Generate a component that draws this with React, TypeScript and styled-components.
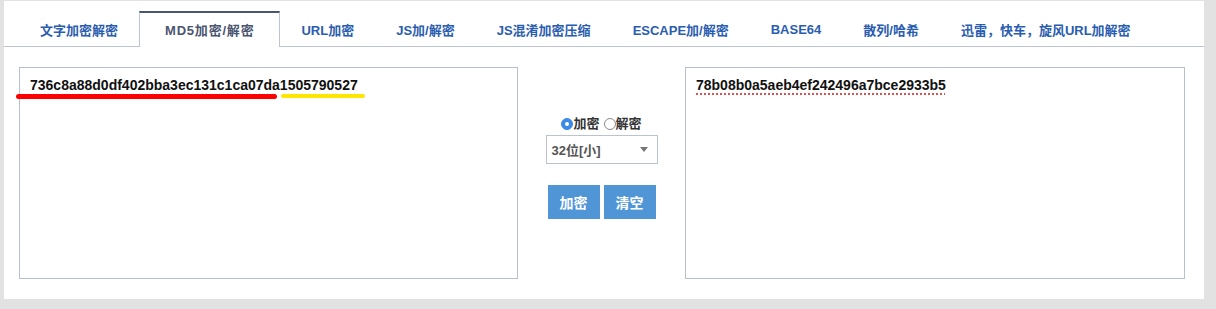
import styled, { createGlobalStyle } from 'styled-components';

const GlobalStyle = createGlobalStyle`
  html, body {
    margin: 0;
    padding: 0;
    background: #e2e2e2;
    font-family: "Liberation Sans", "Noto Sans CJK SC", sans-serif;
  }
`;

const Panel = styled.div`
  margin: 1px 0 0 4px;
  width: 1200px;
  height: 298px;
  background: #ffffff;
  box-sizing: border-box;
`;

const TabBar = styled.div`
  display: flex;
  align-items: flex-start;
  padding: 10px 0 0 15px;
  height: 46px;
  box-sizing: border-box;
  border-bottom: 1px solid #bcc3d3;
`;

const Tab = styled.div<{ $active?: boolean }>`
  height: ${({ $active }) => ($active ? '36px' : '35px')};
  margin-bottom: ${({ $active }) => ($active ? '-1px' : '0')};
  padding: ${({ $active }) => ($active ? '0 25px 1px' : '0 20px 1px')};
  letter-spacing: ${({ $active }) => ($active ? '0.8px' : '0')};
  box-sizing: border-box;
  display: flex;
  align-items: center;
  font-size: 13px;
  font-weight: 700;
  white-space: nowrap;
  color: ${({ $active }) => ($active ? '#4a5570' : '#2a5db0')};
  background: ${({ $active }) => ($active ? '#ffffff' : 'transparent')};
  border: 1px solid ${({ $active }) => ($active ? '#bcc3d3' : 'transparent')};
  border-top: 2px solid ${({ $active }) => ($active ? '#4a5570' : 'transparent')};
  border-bottom: none;
`;

const Content = styled.div`
  display: flex;
  padding: 20px 0 0 15px;
`;

const BoxWrap = styled.div`
  position: relative;
`;

const TextBox = styled.div<{ $width: number }>`
  width: ${({ $width }) => $width}px;
  height: 212px;
  box-sizing: border-box;
  border: 1px solid #b7c0cf;
  padding: 7px 10px;
  font-size: 14px;
  line-height: 20px;
  font-weight: 700;
  color: #111;
`;

const SpellText = styled.span`
  text-decoration: underline dotted #e05050;
  text-decoration-thickness: 2px;
  text-underline-offset: 3px;
`;

const Mark = styled.div<{ $color: string; $left: number; $width: number; $thick: number }>`
  position: absolute;
  top: ${({ $thick }) => 29 - $thick / 2}px;
  left: ${({ $left }) => $left}px;
  width: ${({ $width }) => $width}px;
  height: ${({ $thick }) => $thick}px;
  border-radius: 3px;
  background: ${({ $color }) => $color};
`;

const Middle = styled.div`
  width: 167px;
  display: flex;
  flex-direction: column;
  align-items: center;
  padding-top: 50px;
  box-sizing: border-box;
`;

const RadioRow = styled.div`
  display: flex;
  align-items: center;
  height: 14px;
`;

const Radio = styled.span<{ $checked?: boolean }>`
  width: 12px;
  height: 12px;
  border-radius: 50%;
  box-sizing: border-box;
  display: inline-flex;
  align-items: center;
  justify-content: center;
  background: ${({ $checked }) => ($checked ? '#3b8ae6' : '#fff')};
  border: 1px solid ${({ $checked }) => ($checked ? '#3b8ae6' : '#8a8a8a')};
  &::after {
    content: '';
    width: 4px;
    height: 4px;
    border-radius: 50%;
    background: ${({ $checked }) => ($checked ? '#fff' : 'transparent')};
  }
`;

const RadioLabel = styled.span`
  font-size: 13px;
  font-weight: 700;
  color: #333;
  line-height: 14px;
  margin-right: 4px;
  &:last-child {
    margin-right: 0;
  }
`;

const Select = styled.div`
  margin-top: 4px;
  width: 112px;
  height: 29px;
  box-sizing: border-box;
  border: 1px solid #bcc3d0;
  display: flex;
  align-items: center;
  justify-content: space-between;
  padding: 0 9px 0 5px;
  font-size: 13px;
  font-weight: 700;
  color: #555;
`;

const Caret = styled.span`
  width: 0;
  height: 0;
  border-left: 4px solid transparent;
  border-right: 4px solid transparent;
  border-top: 5px solid #777;
`;

const Buttons = styled.div`
  display: flex;
  gap: 4px;
  margin-top: 21px;
`;

const Button = styled.div`
  width: 52px;
  height: 34px;
  background: #5096d6;
  color: #fff;
  font-size: 14px;
  font-weight: 700;
  display: flex;
  align-items: center;
  justify-content: center;
`;

const tabs = [
  '文字加密解密',
  'MD5加密/解密',
  'URL加密',
  'JS加/解密',
  'JS混淆加密压缩',
  'ESCAPE加/解密',
  'BASE64',
  '散列/哈希',
  '迅雷，快车，旋风URL加解密',
];

export default function App() {
  return (
    <>
      <GlobalStyle />
      <Panel>
        <TabBar>
          {tabs.map((t, i) => (
            <Tab key={t} $active={i === 1}>
              {t}
            </Tab>
          ))}
        </TabBar>
        <Content>
          <BoxWrap>
            <TextBox $width={499}>736c8a88d0df402bba3ec131c1ca07da1505790527</TextBox>
            <Mark $color="#ff0000" $left={-3} $width={261} $thick={5} />
            <Mark $color="#ffe600" $left={262} $width={84} $thick={4} />
          </BoxWrap>
          <Middle>
            <RadioRow>
              <Radio $checked />
              <RadioLabel>加密</RadioLabel>
              <Radio />
              <RadioLabel>解密</RadioLabel>
            </RadioRow>
            <Select>
              <span>32位[小]</span>
              <Caret />
            </Select>
            <Buttons>
              <Button>加密</Button>
              <Button>清空</Button>
            </Buttons>
          </Middle>
          <TextBox $width={500}>
            <SpellText>78b08b0a5aeb4ef242496a7bce2933b5</SpellText>
          </TextBox>
        </Content>
      </Panel>
    </>
  );
}
